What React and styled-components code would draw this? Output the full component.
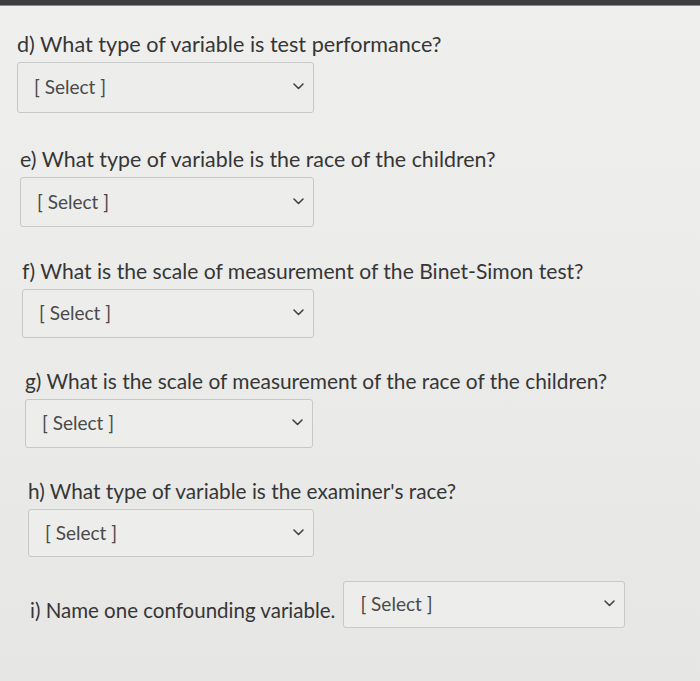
import React from "react";
import styled, { createGlobalStyle } from "styled-components";

const Global = createGlobalStyle`
  html, body { margin: 0; padding: 0; }
  body {
    background: #ebebea;
    font-family: Lato, "Open Sans", sans-serif;
    color: #363636;
  }
`;

const Page = styled.div`
  width: 700px;
  height: 681px;
  overflow: hidden;
  background: linear-gradient(180deg, #efefee 0%, #ebebea 50%, #e6e6e5 100%);
`;

const TopBar = styled.div`
  height: 5px;
  background: #3d3d42;
  border-bottom: 1px solid #8a8a8c;
`;

const List = styled.div`
  display: flex;
  flex-direction: column;
  padding-top: 26px;
`;

const Question = styled.div`
  display: flex;
  flex-direction: column;
  gap: 6px;
  padding-left: ${(p) => p.$indent}px;
  height: ${(p) => p.$h}px;
`;

const Prompt = styled.div`
  font-size: ${(p) => p.$fs || 21}px;
  line-height: 24px;
  color: #363636;
  white-space: nowrap;
`;

const SelectBox = styled.div`
  box-sizing: border-box;
  width: ${(p) => p.$w}px;
  height: ${(p) => p.$hh || 50}px;
  border: 1px solid #c8c8c8;
  border-radius: 3px;
  background: #ededec;
  display: flex;
  align-items: center;
  justify-content: space-between;
  padding: 0 9px 2px 16px;
  font-size: 19px;
  color: #4a4a4a;
  flex-shrink: 0;
`;

const Chevron = () => (
  <svg width="11" height="7" viewBox="0 0 11 7" fill="none">
    <path d="M1 1l4.5 4.5L10 1" stroke="#444" strokeWidth="1.6" strokeLinecap="round" strokeLinejoin="round" />
  </svg>
);

const Select = ({ w, h }) => (
  <SelectBox $w={w} $hh={h}>
    <span>[ Select ]</span>
    <Chevron />
  </SelectBox>
);

const InlineRow = styled.div`
  display: flex;
  align-items: center;
  gap: 8px;
  padding-left: ${(p) => p.$indent}px;
`;

const InlineLabel = styled(Prompt)`
  padding-top: 10px;
`;

const questions = [
  { t: "d) What type of variable is test performance?", indent: 17, w: 297, h: 51, step: 115, fs: 21.6 },
  { t: "e) What type of variable is the race of the children?", indent: 20, w: 294, h: 50, step: 112, fs: 21.4 },
  { t: "f) What is the scale of measurement of the Binet-Simon test?", indent: 22, w: 292, h: 49, step: 110, fs: 21.1 },
  { t: "g) What is the scale of measurement of the race of the children?", indent: 25, w: 288, h: 49, step: 110, fs: 20.9 },
  { t: "h) What type of variable is the examiner's race?", indent: 28, w: 286, h: 48, step: 102, fs: 20.8 },
];

export default function App() {
  return (
    <Page>
      <Global />
      <TopBar />
      <List>
        {questions.map((q) => (
          <Question key={q.t} $indent={q.indent} $h={q.step}>
            <Prompt $fs={q.fs}>{q.t}</Prompt>
            <Select w={q.w} h={q.h} />
          </Question>
        ))}
        <InlineRow $indent={30}>
          <InlineLabel $fs={20.5}>i) Name one confounding variable.</InlineLabel>
          <Select w={282} h={47} />
        </InlineRow>
      </List>
    </Page>
  );
}
